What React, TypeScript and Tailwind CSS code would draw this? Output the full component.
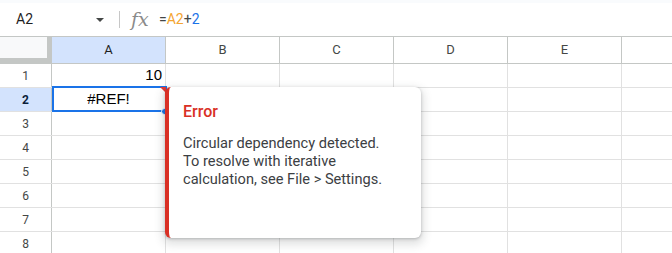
import React from "react";

const COLS = ["A", "B", "C", "D", "E"];
const ROWS = [1, 2, 3, 4, 5, 6, 7, 8];

export default function App() {
  return (
    <div
      className="relative w-[672px] h-[253px] overflow-hidden bg-white text-[#1f1f1f]"
      style={{ fontFamily: "Roboto, Arial, sans-serif" }}
    >
      {/* top strip */}
      <div className="h-[3px] bg-[#f9fbfd]" />
      {/* formula bar */}
      <div className="flex h-[33px] items-center">
        <div className="flex w-[112px] items-center pl-[16px] pr-[8px]">
          <span className="flex-1 text-[14px]">A2</span>
          <svg width="8" height="4" viewBox="0 0 8 4" className="mt-[1px]">
            <path d="M0 0h8L4 4z" fill="#444746" />
          </svg>
        </div>
        <div className="ml-[7px] h-[17px] w-px bg-[#c7c7c7]" />
        <span
          className="ml-[11px] w-[18px] text-[19px] italic leading-none text-[#8a8a8a]"
          style={{ fontFamily: "'DejaVu Serif', serif" }}
        >
          fx
        </span>
        <span className="ml-[10px] text-[14px]">
          <span className="text-[#444746]">=</span>
          <span className="text-[#f4a531]">A2</span>
          <span className="text-[#444746]">+</span>
          <span className="text-[#1a73e8]">2</span>
        </span>
      </div>
      {/* header row */}
      <div className="flex h-[28px] border-y border-[#c4c7c5] bg-[#f8f9fa]">
        <div className="w-[52px] shrink-0 border-r-[5px] border-b-[5px] border-[#c4c7c5] bg-[#f8f9fa]" />
        {COLS.map((c) => (
          <div
            key={c}
            className={`flex w-[114px] shrink-0 items-center justify-center border-r border-[#c4c7c5] text-[13px] ${
              c === "A" ? "bg-[#d3e3fd] text-[#1f1f1f]" : "bg-white text-[#444746]"
            }`}
          >
            {c}
          </div>
        ))}
        <div className="flex-1 bg-white" />
      </div>
      {/* rows */}
      {ROWS.map((r) => (
        <div key={r} className="flex h-[24px] border-b border-[#e1e1e1]">
          <div
            className={`flex w-[52px] shrink-0 items-center justify-center border-r border-[#c4c7c5] text-[12px] ${
              r === 2 ? "bg-[#d3e3fd] font-bold text-[#0b1f3a]" : "bg-white text-[#444746]"
            }`}
          >
            {r}
          </div>
          {COLS.map((c) => (
            <div
              key={c}
              className="flex w-[114px] shrink-0 items-center border-r border-[#e1e1e1] px-[3px] text-[15px] text-black"
              style={{ fontFamily: "'Liberation Sans', Arial, sans-serif" }}
            >
              {c === "A" && r === 1 && <span className="ml-auto">10</span>}
              {c === "A" && r === 2 && <span className="mx-auto">#REF!</span>}
            </div>
          ))}
          <div className="flex-1" />
        </div>
      ))}

      {/* selection border */}
      <div className="pointer-events-none absolute left-[52px] top-[86px] h-[26px] w-[115px] border-2 border-[#1a73e8]" />
      {/* red error triangle */}
      <svg className="absolute left-[160px] top-[87px]" width="6" height="6" viewBox="0 0 6 6">
        <path d="M0 0h6v6z" fill="#e53935" />
      </svg>
      {/* fill handle */}
      <div className="absolute left-[161px] top-[108px] h-[7px] w-[7px] rounded-full border border-white bg-[#1a73e8]" />

      {/* error tooltip */}
      <div className="absolute left-[165px] top-[87px] h-[151px] w-[256px] rounded-[6px] border-l-[4px] border-[#d93025] bg-white pl-[14px] pt-[14px] shadow-[0_1px_3px_rgba(60,64,67,0.3),0_4px_8px_3px_rgba(60,64,67,0.15)]">
        <div className="text-[16px] font-medium leading-[22px] text-[#d93025]">Error</div>
        <div className="mt-[11px] text-[14.6px] leading-[18px] text-[#3c4043]">
          Circular dependency detected.
          <br />
          To resolve with iterative
          <br />
          calculation, see File &gt; Settings.
        </div>
      </div>
    </div>
  );
}
